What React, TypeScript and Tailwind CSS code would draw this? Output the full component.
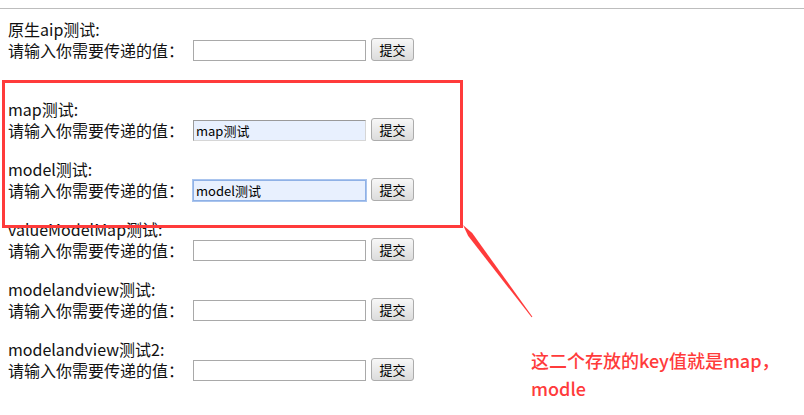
import React from "react";

interface Section {
  title: string;
  value?: string;
  state?: "autofill" | "focus";
}

const sections: Section[] = [
  { title: "原生aip测试:" },
  { title: "map测试:", value: "map测试", state: "autofill" },
  { title: "model测试:", value: "model测试", state: "focus" },
  { title: "valueModelMap测试:" },
  { title: "modelandview测试:" },
  { title: "modelandview测试2:" },
];

const font = { fontFamily: '"Noto Sans CJK SC", "Noto Sans", sans-serif' };

function FormRow({ title, value, state }: Section) {
  const inputCls =
    state === "autofill"
      ? "bg-[#e8f0fe] border-[#9a9a9a] border-r-[#d6d6d6] border-b-[#d6d6d6]"
      : state === "focus"
        ? "bg-[#e8f0fe] border-[#8fb1e6] outline outline-1 outline-[#a9c4ee]"
        : "bg-white border-[#a9a9a9]";
  return (
    <div>
      <div className="h-[18px] leading-[18px] text-[16px] text-[#111]">{title}</div>
      <div className="flex h-[23px] items-center">
        <span className="mr-[9px] text-[16px] leading-[18px] text-[#111]">
          请输入你需要传递的值：
        </span>
        <input
          readOnly
          value={value ?? ""}
          className={`mt-[2px] h-[21px] w-[173px] border px-[2px] text-[13px] leading-[19px] text-black focus:outline-none ${inputCls}`}
          style={font}
        />
        <button
          type="button"
          className="ml-[5px] h-[23px] w-[43px] rounded-[3px] border border-[#acacac] bg-gradient-to-b from-[#f7f7f7] to-[#dcdcdc] text-[13px] leading-[20px] text-black"
          style={font}
        >
          提交
        </button>
      </div>
    </div>
  );
}

export default function App() {
  return (
    <div className="relative h-[415px] w-[804px] overflow-hidden bg-white" style={font}>
      <div className="mt-[8px] h-px w-full bg-[#bdbdbd]" />

      <div className="mt-[11px] px-[8px]">
        <FormRow {...sections[0]} />
        <div className="mt-[39px] flex flex-col gap-[19px]">
          {sections.slice(1).map((s) => (
            <FormRow key={s.title} {...s} />
          ))}
        </div>
      </div>

      {/* annotation overlay */}
      <div className="absolute left-[2px] top-[80px] h-[148px] w-[461px] border-[3px] border-[#ff3b3b]" />
      <svg className="absolute left-0 top-0" width="804" height="415" viewBox="0 0 804 415">
        <polygon
          points="463,225 472.2,233.1 532.4,316.7 531.6,317.3 468.2,236.1"
          fill="#ff3b3b"
        />
      </svg>
      <div className="absolute left-[531px] top-[346px] text-[18px] leading-[28px] font-medium text-[#ff3b3b]">
        这二个存放的key值就是map，
        <br />
        modle
      </div>
    </div>
  );
}
